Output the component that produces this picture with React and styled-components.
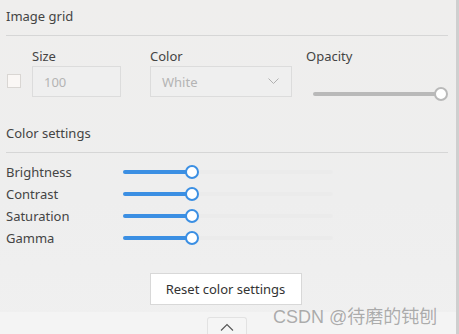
import React from "react";
import styled, { createGlobalStyle } from "styled-components";

const Global = createGlobalStyle`
  html, body { margin: 0; padding: 0; }
  body { width: 459px; height: 334px; overflow: hidden; background: #efefef; font-family: "Noto Sans", "Open Sans", sans-serif; }
`;

const Screen = styled.div`
  width: 459px;
  height: 334px;
  display: flex;
  background: #cfcfcf;
`;

const Panel = styled.div`
  width: 456px;
  height: 334px;
  display: flex;
  flex-direction: column;
  background: linear-gradient(180deg, #efeeed 0%, #eeeeee 60%, #f0f0f0 100%);
  position: relative;
`;

const Section = styled.div`
  padding: 0 8px 0 6px;
`;

const Title = styled.div`
  font-size: 13px;
  color: #444;
  height: 35px;
  line-height: 32px;
  border-bottom: 1px solid #d6d6d6;
`;

const GridRow = styled.div`
  display: flex;
  align-items: flex-start;
  padding-top: 10px;
`;

const Check = styled.div`
  width: 14px;
  height: 14px;
  border: 1px solid #d9d6d3;
  background: #faf7f5;
  margin: 28px 11px 0 1px;
  box-sizing: border-box;
`;

const Field = styled.div`
  display: flex;
  flex-direction: column;
  margin-right: ${p => p.$gap || 0}px;
`;

const Label = styled.div`
  font-size: 13px;
  color: #444;
  height: 20px;
  line-height: 20px;
`;

const Input = styled.div`
  width: ${p => p.$w}px;
  height: 31px;
  box-sizing: border-box;
  border: 1px solid #dcdcdc;
  background: #efefef;
  color: #b4b4b4;
  font-size: 13px;
  display: flex;
  align-items: center;
  justify-content: space-between;
  padding: 0 12px 0 11px;
`;

const OpacityWrap = styled.div`
  height: 31px;
  display: flex;
  align-items: flex-end;
`;

const OpacityTrack = styled.div`
  width: 129px;
  height: 4px;
  border-radius: 2px;
  background: #b9b9b9;
  position: relative;
  margin: 0 0 1px 7px;
`;

const GrayThumb = styled.div`
  position: absolute;
  right: -6px;
  top: -5px;
  width: 14px;
  height: 14px;
  border-radius: 50%;
  background: #fff;
  border: 2px solid #b9b9b9;
  box-sizing: border-box;
`;

const Title2 = styled(Title)`
  margin-top: 19px;
  height: 36px;
  line-height: 34px;
`;

const Sliders = styled.div`
  padding-top: 8px;
  display: flex;
  flex-direction: column;
`;

const SliderRow = styled.div`
  display: flex;
  align-items: center;
  height: 22px;
`;

const RowLabel = styled.div`
  width: 117px;
  font-size: 13px;
  color: #444;
`;

const Track = styled.div`
  width: 210px;
  height: 4px;
  border-radius: 2px;
  background: #ebebeb;
  position: relative;
`;

const Fill = styled.div`
  height: 4px;
  border-radius: 2px;
  background: #3b8fe3;
`;

const Thumb = styled.div`
  position: absolute;
  top: -5px;
  width: 14px;
  height: 14px;
  border-radius: 50%;
  background: #fff;
  border: 2px solid #3b8fe3;
  box-sizing: border-box;
  margin-left: -7px;
`;

const ButtonRow = styled.div`
  display: flex;
  justify-content: center;
  padding-top: 24px;
  height: 63px;
  box-sizing: border-box;
  margin-left: -3px;
`;

const Button = styled.div`
  width: 152px;
  height: 32px;
  box-sizing: border-box;
  border: 1px solid #d8d8d8;
  background: #fff;
  font-size: 13px;
  color: #333;
  display: flex;
  align-items: center;
  justify-content: center;
`;

const Bottom = styled.div`
  flex: 1;
  background: #f4f4f4;
  display: flex;
  justify-content: center;
  align-items: flex-end;
`;

const Tab = styled.div`
  width: 40px;
  height: 17px;
  border: 1px solid #e2e2e2;
  border-bottom: none;
  border-radius: 3px 3px 0 0;
  background: #f5f5f5;
  display: flex;
  justify-content: center;
  align-items: flex-start;
  padding-top: 5px;
  box-sizing: border-box;
  margin-right: 3px;
`;

const Watermark = styled.div`
  position: absolute;
  left: 273px;
  top: 302px;
  font-size: 18px;
  color: rgba(110, 110, 110, 0.55);
  font-family: "Liberation Sans", "Noto Sans CJK SC", sans-serif;
  white-space: nowrap;
`;

const sliders = ["Brightness", "Contrast", "Saturation", "Gamma"];

export default function App() {
  return (
    <>
      <Global />
      <Screen>
        <Panel>
          <Section>
            <Title>Image grid</Title>
            <GridRow>
              <Check />
              <Field $gap={29}>
                <Label>Size</Label>
                <Input $w={89}>100</Input>
              </Field>
              <Field $gap={14}>
                <Label>Color</Label>
                <Input $w={142}>
                  White
                  <svg width="11" height="7" viewBox="0 0 11 7">
                    <path d="M0.5 0.5 L5.5 5.5 L10.5 0.5" fill="none" stroke="#b0b0b0" strokeWidth="1" />
                  </svg>
                </Input>
              </Field>
              <Field>
                <Label>Opacity</Label>
                <OpacityWrap>
                  <OpacityTrack>
                    <GrayThumb />
                  </OpacityTrack>
                </OpacityWrap>
              </Field>
            </GridRow>
            <Title2>Color settings</Title2>
            <Sliders>
              {sliders.map(s => (
                <SliderRow key={s}>
                  <RowLabel>{s}</RowLabel>
                  <Track>
                    <Fill style={{ width: "69px" }} />
                    <Thumb style={{ left: "69px" }} />
                  </Track>
                </SliderRow>
              ))}
            </Sliders>
            <ButtonRow>
              <Button>Reset color settings</Button>
            </ButtonRow>
          </Section>
          <Bottom>
            <Tab>
              <svg width="14" height="8" viewBox="0 0 14 8">
                <path d="M1 7.5 L7 1.5 L13 7.5" fill="none" stroke="#555" strokeWidth="1.1" />
              </svg>
            </Tab>
          </Bottom>
          <Watermark>CSDN @待磨的钝刨</Watermark>
        </Panel>
      </Screen>
    </>
  );
}
